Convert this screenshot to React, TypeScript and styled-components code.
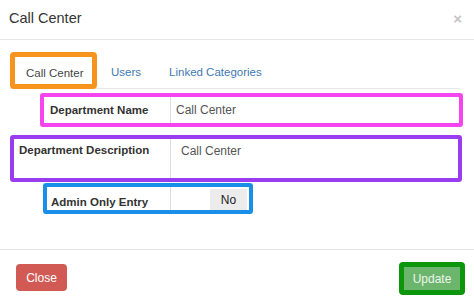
import React from 'react';
import styled, {createGlobalStyle} from 'styled-components';

const GlobalStyle = createGlobalStyle`
  html, body {
    margin: 0;
    padding: 0;
    background: #fff;
    font-family: 'Liberation Sans', Arial, sans-serif;
  }
`;

const Modal = styled.div`
  width: 474px;
  height: 305px;
  display: flex;
  flex-direction: column;
  background: #fff;
  overflow: hidden;
`;

const Header = styled.div`
  height: 40px;
  padding: 0 12px 3px 9px;
  box-sizing: border-box;
  display: flex;
  align-items: center;
  justify-content: space-between;
  border-bottom: 1px solid #e5e5e5;
`;

const Title = styled.h4`
  margin: 0;
  font-size: 14.5px;
  font-weight: 400;
  color: #333;
`;

const CloseX = styled.span`
  font-size: 15px;
  font-weight: 700;
  color: #c4c4c4;
  line-height: 1;
`;

const Body = styled.div`
  flex: 1;
  padding: 12px 14px 0 10px;
`;

const TabBar = styled.div`
  display: flex;
  align-items: center;
  height: 36px;
  border-bottom: 1px solid #e8e8e8;
`;

const ActiveTab = styled.div`
  width: 87px;
  height: 37px;
  box-sizing: border-box;
  padding: 4px 0 0 11px;
  display: flex;
  align-items: center;
  border: 5px solid #f7941d;
  border-radius: 4px;
  font-size: 11.5px;
  color: #444;
  background: #fff;
  margin-bottom: -1px;
  align-self: flex-start;
`;

const Tab = styled.div`
  padding: 4px 14px 0;
  font-size: 11.5px;
  color: #3f79b3;
  &:first-of-type {
    padding-left: 12px;
  }
`;

const Rows = styled.div`
  display: flex;
  flex-direction: column;
`;

const Highlight = styled.div<{$color: string; $indent: number; $width: number; $height: number; $top: number}>`
  margin-left: ${(p) => p.$indent}px;
  margin-top: ${(p) => p.$top}px;
  width: ${(p) => p.$width}px;
  height: ${(p) => p.$height}px;
  box-sizing: border-box;
  border: 4px solid ${(p) => p.$color};
  border-radius: 3px;
  display: flex;
  background: #fff;
`;

const Label = styled.div<{$width: number; $pad: number; $align: string}>`
  width: ${(p) => p.$width}px;
  padding-left: ${(p) => p.$pad}px;
  box-sizing: border-box;
  display: flex;
  align-items: ${(p) => p.$align};
  font-size: 11.5px;
  font-weight: 700;
  color: #333;
`;

const Value = styled.div<{$pad: number; $align: string}>`
  flex: 1;
  border-left: 1px solid #ddd;
  padding-left: ${(p) => p.$pad}px;
  display: flex;
  align-items: ${(p) => p.$align};
  font-size: 12px;
  color: #555;
`;

const Toggle = styled.div`
  flex: 1;
  border-left: 1px solid #ddd;
  display: flex;
  justify-content: flex-end;
  padding: 2px 2px 0 0;
`;

const ToggleOption = styled.div`
  width: 37px;
  background: #ececec;
  display: flex;
  align-items: center;
  justify-content: center;
  font-size: 12px;
  color: #222;
`;

const Footer = styled.div`
  height: 56px;
  box-sizing: border-box;
  border-top: 1px solid #e5e5e5;
  padding: 0 9px 0 16px;
  display: flex;
  align-items: center;
  justify-content: space-between;
`;

const Button = styled.button<{$bg: string}>`
  font-family: inherit;
  font-size: 12px;
  color: #fff;
  background: ${(p) => p.$bg};
  border: none;
  border-radius: 4px;
  padding: 0;
  display: flex;
  align-items: center;
  justify-content: center;
`;

const CloseButton = styled(Button)`
  width: 51px;
  height: 27px;
`;

const UpdateFrame = styled.div`
  width: 66px;
  height: 33px;
  box-sizing: border-box;
  border: 5px solid #0c960c;
  border-radius: 4px;
  display: flex;
  margin-top: 2px;
`;

const UpdateButton = styled(Button)`
  flex: 1;
  border-radius: 0;
  color: #eef5ee;
`;

export default function App() {
  return (
    <>
      <GlobalStyle />
      <Modal>
        <Header>
          <Title>Call Center</Title>
          <CloseX>×</CloseX>
        </Header>
        <Body>
          <TabBar>
            <ActiveTab>Call Center</ActiveTab>
            <Tab>Users</Tab>
            <Tab>Linked Categories</Tab>
          </TabBar>
          <Rows>
            <Highlight $color="#f545ee" $indent={30} $width={423} $height={34} $top={4}>
              <Label $width={126} $pad={6} $align="center">Department Name</Label>
              <Value $pad={5} $align="center">Call Center</Value>
            </Highlight>
            <Highlight $color="#9a3cf0" $indent={0} $width={452} $height={47} $top={8}>
              <Label $width={156} $pad={5} $align="flex-start" style={{paddingTop: 5}}>
                Department Description
              </Label>
              <Value $pad={10} $align="flex-start" style={{paddingTop: 5}}>
                Call Center
              </Value>
            </Highlight>
            <Highlight $color="#1a8fe8" $indent={33} $width={210} $height={31} $top={1}>
              <Label $width={123} $pad={4} $align="flex-end" style={{paddingBottom: 2}}>
                Admin Only Entry
              </Label>
              <Toggle>
                <ToggleOption>No</ToggleOption>
              </Toggle>
            </Highlight>
          </Rows>
        </Body>
        <Footer>
          <CloseButton $bg="#d25a55">Close</CloseButton>
          <UpdateFrame>
            <UpdateButton $bg="#6cb56c">Update</UpdateButton>
          </UpdateFrame>
        </Footer>
      </Modal>
    </>
  );
}
